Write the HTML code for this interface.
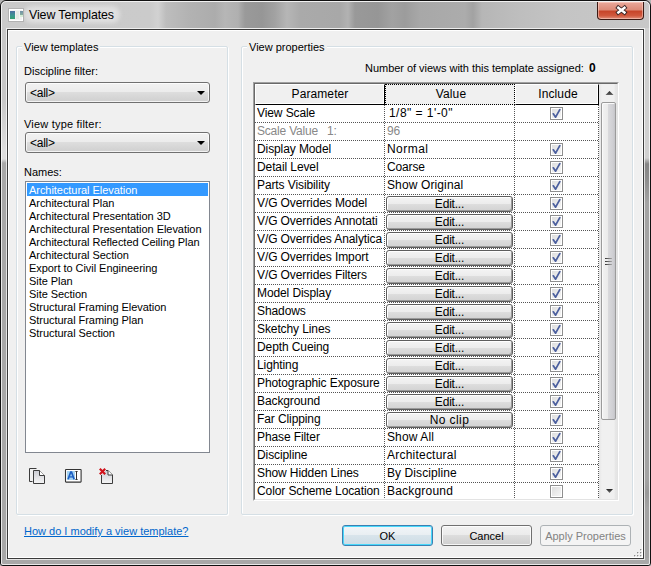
<!DOCTYPE html>
<html><head><meta charset="utf-8">
<style>
*{box-sizing:border-box;margin:0;padding:0}
html,body{width:651px;height:566px;overflow:hidden;background:#b4b4b4}
body{position:relative;font-family:"Liberation Sans",sans-serif;font-size:12px;color:#000}
.a{position:absolute}
.t{position:absolute;white-space:nowrap;line-height:14px}
#frame{left:0;top:0;width:651px;height:566px;border:1px solid #111;border-radius:6px 6px 3px 3px;background:#c6c6c6}
#tbar{left:2px;top:2px;width:647px;height:26px;border-radius:4px 4px 0 0;
 background:linear-gradient(90deg,#cacaca 0,#cbcbcb 148px,#d2d2d2 156px,#bdbdbd 164px,#b2b2b2 188px,#acacac 213px,#b6b6b6 223px,#b0b0b0 236px,#9a9a9a 243px,#969696 260px,#a2a2a2 273px,#b6b6b6 285px,#aaaaaa 298px,#a8a8a8 338px,#b2b2b2 346px,#999999 353px,#969696 376px,#a2a2a2 390px,#9c9c9c 403px,#a8a8a8 418px,#acacac 463px,#a2a2a2 471px,#b6b6b6 480px,#bebebe 518px,#c4c4c4 558px,#c8c8c8 647px)}
#frameHi{left:1px;top:1px;width:649px;height:564px;border:1px solid rgba(255,255,255,.75);border-radius:5px 5px 2px 2px}
#client{left:7px;top:29px;width:637px;height:530px;border:1px solid #3a3a3a;background:#f0f0f0;box-shadow:0 0 0 1px rgba(255,255,255,.7)}
#clientHi{left:8px;top:30px;width:635px;height:528px;border:1px solid #fff}
.grp{position:absolute;border:1px solid #d5dfe5;border-radius:2px;box-shadow:inset 1px 1px 0 #fff,1px 1px 0 #fff}
.lbl{background:#f0f0f0;padding:0 2px}
.combo{position:absolute;border:1px solid #707070;border-radius:3px;
 background:linear-gradient(#f2f2f2 0,#ebebeb 50%,#dddddd 50%,#cfcfcf 100%);box-shadow:inset 0 0 0 1px rgba(255,255,255,.75)}
.arrow{position:absolute;width:0;height:0;border-left:4px solid transparent;border-right:4px solid transparent;border-top:4px solid #000}
.li{font-size:11px;line-height:13px;letter-spacing:-0.05px;padding-top:1px}
.hd{background:#f0f0f0;border-top:1px solid #fff;border-left:1px solid #fff;border-right:1px solid #000;border-bottom:1px solid #000;box-shadow:inset -1px -1px 0 #fff}
.foc{border:1px dotted #000;background:transparent}
.th{font-size:12px;line-height:14px;letter-spacing:-0.2px}
.td{font-size:12px;line-height:14px;letter-spacing:-0.1px}
.vdot{width:1px;background:repeating-linear-gradient(180deg,#555 0,#555 1px,transparent 1px,transparent 2px)}
.hdot{height:1px;background:repeating-linear-gradient(90deg,#555 0,#555 1px,transparent 1px,transparent 2px)}
.ebtn{border:1px solid #5e5e5e;border-radius:3px;background:linear-gradient(#f4f4f4 0,#ececec 50%,#dedede 50%,#d2d2d2 100%);box-shadow:inset 1px 1px 0 #fff,inset -1px -1px 0 #9a9a9a}
.cb{width:13px;height:13px;border:1px solid #8f8f8f;background:linear-gradient(135deg,#dcdcdc,#f8f8f8);box-shadow:inset 0 0 0 1px #fff}
.arrowup{width:0;height:0;border-left:4px solid transparent;border-right:4px solid transparent;border-bottom:4px solid #333}
.thumb{border:1px solid #9b9b9b;border-radius:2px;background:linear-gradient(90deg,#f2f2f2 0,#ebebeb 45%,#d9d9dc 50%,#cfcfd3 85%,#c4c4c8 100%);box-shadow:inset 1px 1px 0 #fafafa}
.grip{width:7px;height:1px;background:linear-gradient(90deg,#333,#aaa)}
.lab{font-size:11px;line-height:14px}
.btn{border:1px solid #707070;border-radius:3px;background:linear-gradient(#f2f2f2 0,#ebebeb 50%,#dddddd 50%,#cfcfcf 100%);box-shadow:inset 0 0 0 1px rgba(255,255,255,.8)}
.okb{border:1px solid #3c7fb1;border-radius:3px;background:linear-gradient(#f1f5f8 0,#e8eef2 50%,#d8e4eb 50%,#cddce5 100%);box-shadow:inset 0 0 0 1px #48d8fb}
.dbtn{border:1px solid #adb2b5;border-radius:3px;background:#f4f4f4}
.closeb{border:1px solid #3b1a14;border-top:none;border-radius:0 0 4px 4px;background:linear-gradient(#e9a99b 0,#dd8b78 45%,#c7452a 55%,#d0583d 80%,#e0907c 100%);box-shadow:inset 0 0 0 1px rgba(255,220,210,.5)}
</style></head><body>
<div id="frame" class="a"></div>
<div id="tbar" class="a"></div>
<div class="a" style="left:1px;top:28px;width:6px;height:532px;background:linear-gradient(180deg,#c8c8c8 0,#c8c8c8 72px,#dedede 122px,#dedede 131px,#a8a8a8 135px,#a8a8a8 100%)"></div>
<div class="a" style="left:644px;top:28px;width:6px;height:532px;background:linear-gradient(180deg,#d0d0d0 0,#d0d0d0 130px,#858585 136px,#8c8c8c 150px,#a4a4a4 175px,#a4a4a4 450px,#999 465px,#a4a4a4 480px,#a4a4a4 100%)"></div>
<div class="a" style="left:1px;top:558px;width:649px;height:7px;background:#a8a8a8;border-radius:0 0 2px 2px"></div>
<div id="frameHi" class="a"></div>
<div id="client" class="a"></div>
<div id="clientHi" class="a"></div>

<!-- title -->
<div class="a" style="left:24px;top:6px;width:96px;height:17px;border-radius:8px;background:rgba(235,235,235,.65);filter:blur(2px)"></div>
<div class="t" style="left:29px;top:8px;font-size:12.4px;letter-spacing:-0.1px;color:#000">View Templates</div>

<!-- left group -->
<div class="grp" style="left:16px;top:46px;width:212px;height:469px"></div>
<div class="t lbl" style="left:22px;top:40px;font-size:11px">View templates</div>
<div class="t" style="left:24px;top:64px;font-size:11px">Discipline filter:</div>
<div class="combo" style="left:25px;top:82px;width:185px;height:21px"></div>
<div class="t" style="left:30px;top:86px;font-size:12px;letter-spacing:-0.25px">&lt;all&gt;</div>
<div class="arrow" style="left:197px;top:91px"></div>
<div class="t" style="left:24px;top:117px;font-size:11px;letter-spacing:0.2px">View type filter:</div>
<div class="combo" style="left:25px;top:132px;width:185px;height:21px"></div>
<div class="t" style="left:30px;top:136px;font-size:12px;letter-spacing:-0.25px">&lt;all&gt;</div>
<div class="arrow" style="left:197px;top:141px"></div>
<div class="t" style="left:24px;top:165px;font-size:11px">Names:</div>

<!-- right group -->
<div class="grp" style="left:241px;top:46px;width:392px;height:469px"></div>
<div class="t lbl" style="left:247px;top:40px;font-size:11px">View properties</div>

<!-- listbox -->
<div class="a" style="left:25px;top:181px;width:185px;height:272px;border:1px solid #828790;background:#fff"></div>
<div class="a" style="left:27px;top:183px;width:181px;height:13px;background:#3399ff"></div>
<div class="t li" style="left:29px;top:183px;color:#fff">Architectural Elevation</div>
<div class="t li" style="left:29px;top:196px;color:#000">Architectural Plan</div>
<div class="t li" style="left:29px;top:209px;color:#000">Architectural Presentation 3D</div>
<div class="t li" style="left:29px;top:222px;color:#000">Architectural Presentation Elevation</div>
<div class="t li" style="left:29px;top:235px;color:#000">Architectural Reflected Ceiling Plan</div>
<div class="t li" style="left:29px;top:248px;color:#000">Architectural Section</div>
<div class="t li" style="left:29px;top:261px;color:#000">Export to Civil Engineering</div>
<div class="t li" style="left:29px;top:274px;color:#000">Site Plan</div>
<div class="t li" style="left:29px;top:287px;color:#000">Site Section</div>
<div class="t li" style="left:29px;top:300px;color:#000">Structural Framing Elevation</div>
<div class="t li" style="left:29px;top:313px;color:#000">Structural Framing Plan</div>
<div class="t li" style="left:29px;top:326px;color:#000">Structural Section</div>
<!-- table -->
<div class="a" style="left:253px;top:82px;width:366px;height:419px;background:#fff;border-top:1px solid #a0a0a0;border-left:1px solid #a0a0a0;border-right:1px solid #fff;border-bottom:1px solid #fff"></div>
<div class="a" style="left:254px;top:83px;width:364px;height:417px;border-top:1px solid #696969;border-left:1px solid #696969;border-right:1px solid #e3e3e3;border-bottom:1px solid #e3e3e3"></div>
<div class="a hd" style="left:255px;top:84px;width:130px;height:21px"></div>
<div class="a foc" style="left:385px;top:84px;width:130px;height:21px;background:#f0f0f0"></div>
<div class="a hd" style="left:515px;top:84px;width:84px;height:21px"></div>
<div class="t th" style="left:255px;top:87px;width:130px;text-align:center;letter-spacing:0.1px">Parameter</div>
<div class="t th" style="left:386px;top:87px;width:130px;text-align:center;letter-spacing:0.15px">Value</div>
<div class="t th" style="left:515px;top:87px;width:86px;text-align:center;letter-spacing:0.1px">Include</div>
<div class="a vdot" style="left:384px;top:105px;height:394px"></div>
<div class="a vdot" style="left:514px;top:105px;height:394px"></div>
<div class="a vdot" style="left:598px;top:105px;height:394px"></div>
<div class="a hdot" style="left:255px;top:122px;width:344px"></div>
<div class="a hdot" style="left:255px;top:140px;width:344px"></div>
<div class="a hdot" style="left:255px;top:158px;width:344px"></div>
<div class="a hdot" style="left:255px;top:176px;width:344px"></div>
<div class="a hdot" style="left:255px;top:194px;width:344px"></div>
<div class="a hdot" style="left:255px;top:212px;width:344px"></div>
<div class="a hdot" style="left:255px;top:230px;width:344px"></div>
<div class="a hdot" style="left:255px;top:248px;width:344px"></div>
<div class="a hdot" style="left:255px;top:266px;width:344px"></div>
<div class="a hdot" style="left:255px;top:284px;width:344px"></div>
<div class="a hdot" style="left:255px;top:302px;width:344px"></div>
<div class="a hdot" style="left:255px;top:320px;width:344px"></div>
<div class="a hdot" style="left:255px;top:338px;width:344px"></div>
<div class="a hdot" style="left:255px;top:356px;width:344px"></div>
<div class="a hdot" style="left:255px;top:374px;width:344px"></div>
<div class="a hdot" style="left:255px;top:392px;width:344px"></div>
<div class="a hdot" style="left:255px;top:410px;width:344px"></div>
<div class="a hdot" style="left:255px;top:428px;width:344px"></div>
<div class="a hdot" style="left:255px;top:446px;width:344px"></div>
<div class="a hdot" style="left:255px;top:464px;width:344px"></div>
<div class="a hdot" style="left:255px;top:482px;width:344px"></div>
<div class="t td" style="left:257px;top:106px;width:126px;overflow:hidden;color:#000">View Scale</div>
<div class="t td" style="left:389px;top:106px;color:#000;letter-spacing:0.45px">1/8&quot; = 1'-0&quot;</div>
<div class="a cb" style="left:550px;top:107px"></div>
<svg class="a" style="left:550px;top:107px" width="13" height="13" viewBox="0 0 13 13"><path d="M3.3 6.8 L5.6 10.2 L9.8 2.6" fill="none" stroke="#4b5f9e" stroke-width="1.75" stroke-linecap="round" stroke-linejoin="round"/></svg>
<div class="t td" style="left:257px;top:124px;color:#888;letter-spacing:-0.2px">Scale Value</div><div class="t td" style="left:327px;top:124px;color:#888">1:</div>
<div class="t td" style="left:387px;top:124px;color:#888">96</div>
<div class="t td" style="left:257px;top:142px;width:126px;overflow:hidden;color:#000">Display Model</div>
<div class="t td" style="left:387px;top:142px;color:#000;letter-spacing:0.45px">Normal</div>
<div class="a cb" style="left:550px;top:143px"></div>
<svg class="a" style="left:550px;top:143px" width="13" height="13" viewBox="0 0 13 13"><path d="M3.3 6.8 L5.6 10.2 L9.8 2.6" fill="none" stroke="#4b5f9e" stroke-width="1.75" stroke-linecap="round" stroke-linejoin="round"/></svg>
<div class="t td" style="left:257px;top:160px;width:126px;overflow:hidden;color:#000">Detail Level</div>
<div class="t td" style="left:387px;top:160px;color:#000;letter-spacing:-0.15px">Coarse</div>
<div class="a cb" style="left:550px;top:161px"></div>
<svg class="a" style="left:550px;top:161px" width="13" height="13" viewBox="0 0 13 13"><path d="M3.3 6.8 L5.6 10.2 L9.8 2.6" fill="none" stroke="#4b5f9e" stroke-width="1.75" stroke-linecap="round" stroke-linejoin="round"/></svg>
<div class="t td" style="left:257px;top:178px;width:126px;overflow:hidden;color:#000">Parts Visibility</div>
<div class="t td" style="left:387px;top:178px;color:#000;letter-spacing:0.12px">Show Original</div>
<div class="a cb" style="left:550px;top:179px"></div>
<svg class="a" style="left:550px;top:179px" width="13" height="13" viewBox="0 0 13 13"><path d="M3.3 6.8 L5.6 10.2 L9.8 2.6" fill="none" stroke="#4b5f9e" stroke-width="1.75" stroke-linecap="round" stroke-linejoin="round"/></svg>
<div class="t td" style="left:257px;top:196px;width:126px;overflow:hidden;color:#000">V/G Overrides Model</div>
<div class="a ebtn" style="left:386px;top:196px;width:127px;height:16px"></div>
<div class="t td" style="left:386px;top:197px;width:127px;text-align:center;letter-spacing:-0.2px">Edit...</div>
<div class="a cb" style="left:550px;top:197px"></div>
<svg class="a" style="left:550px;top:197px" width="13" height="13" viewBox="0 0 13 13"><path d="M3.3 6.8 L5.6 10.2 L9.8 2.6" fill="none" stroke="#4b5f9e" stroke-width="1.75" stroke-linecap="round" stroke-linejoin="round"/></svg>
<div class="t td" style="left:257px;top:214px;width:126px;overflow:hidden;color:#000">V/G Overrides Annotati</div>
<div class="a ebtn" style="left:386px;top:214px;width:127px;height:16px"></div>
<div class="t td" style="left:386px;top:215px;width:127px;text-align:center;letter-spacing:-0.2px">Edit...</div>
<div class="a cb" style="left:550px;top:215px"></div>
<svg class="a" style="left:550px;top:215px" width="13" height="13" viewBox="0 0 13 13"><path d="M3.3 6.8 L5.6 10.2 L9.8 2.6" fill="none" stroke="#4b5f9e" stroke-width="1.75" stroke-linecap="round" stroke-linejoin="round"/></svg>
<div class="t td" style="left:257px;top:232px;width:126px;overflow:hidden;color:#000">V/G Overrides Analytica</div>
<div class="a ebtn" style="left:386px;top:232px;width:127px;height:16px"></div>
<div class="t td" style="left:386px;top:233px;width:127px;text-align:center;letter-spacing:-0.2px">Edit...</div>
<div class="a cb" style="left:550px;top:233px"></div>
<svg class="a" style="left:550px;top:233px" width="13" height="13" viewBox="0 0 13 13"><path d="M3.3 6.8 L5.6 10.2 L9.8 2.6" fill="none" stroke="#4b5f9e" stroke-width="1.75" stroke-linecap="round" stroke-linejoin="round"/></svg>
<div class="t td" style="left:257px;top:250px;width:126px;overflow:hidden;color:#000">V/G Overrides Import</div>
<div class="a ebtn" style="left:386px;top:250px;width:127px;height:16px"></div>
<div class="t td" style="left:386px;top:251px;width:127px;text-align:center;letter-spacing:-0.2px">Edit...</div>
<div class="a cb" style="left:550px;top:251px"></div>
<svg class="a" style="left:550px;top:251px" width="13" height="13" viewBox="0 0 13 13"><path d="M3.3 6.8 L5.6 10.2 L9.8 2.6" fill="none" stroke="#4b5f9e" stroke-width="1.75" stroke-linecap="round" stroke-linejoin="round"/></svg>
<div class="t td" style="left:257px;top:268px;width:126px;overflow:hidden;color:#000">V/G Overrides Filters</div>
<div class="a ebtn" style="left:386px;top:268px;width:127px;height:16px"></div>
<div class="t td" style="left:386px;top:269px;width:127px;text-align:center;letter-spacing:-0.2px">Edit...</div>
<div class="a cb" style="left:550px;top:269px"></div>
<svg class="a" style="left:550px;top:269px" width="13" height="13" viewBox="0 0 13 13"><path d="M3.3 6.8 L5.6 10.2 L9.8 2.6" fill="none" stroke="#4b5f9e" stroke-width="1.75" stroke-linecap="round" stroke-linejoin="round"/></svg>
<div class="t td" style="left:257px;top:286px;width:126px;overflow:hidden;color:#000">Model Display</div>
<div class="a ebtn" style="left:386px;top:286px;width:127px;height:16px"></div>
<div class="t td" style="left:386px;top:287px;width:127px;text-align:center;letter-spacing:-0.2px">Edit...</div>
<div class="a cb" style="left:550px;top:287px"></div>
<svg class="a" style="left:550px;top:287px" width="13" height="13" viewBox="0 0 13 13"><path d="M3.3 6.8 L5.6 10.2 L9.8 2.6" fill="none" stroke="#4b5f9e" stroke-width="1.75" stroke-linecap="round" stroke-linejoin="round"/></svg>
<div class="t td" style="left:257px;top:304px;width:126px;overflow:hidden;color:#000">Shadows</div>
<div class="a ebtn" style="left:386px;top:304px;width:127px;height:16px"></div>
<div class="t td" style="left:386px;top:305px;width:127px;text-align:center;letter-spacing:-0.2px">Edit...</div>
<div class="a cb" style="left:550px;top:305px"></div>
<svg class="a" style="left:550px;top:305px" width="13" height="13" viewBox="0 0 13 13"><path d="M3.3 6.8 L5.6 10.2 L9.8 2.6" fill="none" stroke="#4b5f9e" stroke-width="1.75" stroke-linecap="round" stroke-linejoin="round"/></svg>
<div class="t td" style="left:257px;top:322px;width:126px;overflow:hidden;color:#000">Sketchy Lines</div>
<div class="a ebtn" style="left:386px;top:322px;width:127px;height:16px"></div>
<div class="t td" style="left:386px;top:323px;width:127px;text-align:center;letter-spacing:-0.2px">Edit...</div>
<div class="a cb" style="left:550px;top:323px"></div>
<svg class="a" style="left:550px;top:323px" width="13" height="13" viewBox="0 0 13 13"><path d="M3.3 6.8 L5.6 10.2 L9.8 2.6" fill="none" stroke="#4b5f9e" stroke-width="1.75" stroke-linecap="round" stroke-linejoin="round"/></svg>
<div class="t td" style="left:257px;top:340px;width:126px;overflow:hidden;color:#000">Depth Cueing</div>
<div class="a ebtn" style="left:386px;top:340px;width:127px;height:16px"></div>
<div class="t td" style="left:386px;top:341px;width:127px;text-align:center;letter-spacing:-0.2px">Edit...</div>
<div class="a cb" style="left:550px;top:341px"></div>
<svg class="a" style="left:550px;top:341px" width="13" height="13" viewBox="0 0 13 13"><path d="M3.3 6.8 L5.6 10.2 L9.8 2.6" fill="none" stroke="#4b5f9e" stroke-width="1.75" stroke-linecap="round" stroke-linejoin="round"/></svg>
<div class="t td" style="left:257px;top:358px;width:126px;overflow:hidden;color:#000">Lighting</div>
<div class="a ebtn" style="left:386px;top:358px;width:127px;height:16px"></div>
<div class="t td" style="left:386px;top:359px;width:127px;text-align:center;letter-spacing:-0.2px">Edit...</div>
<div class="a cb" style="left:550px;top:359px"></div>
<svg class="a" style="left:550px;top:359px" width="13" height="13" viewBox="0 0 13 13"><path d="M3.3 6.8 L5.6 10.2 L9.8 2.6" fill="none" stroke="#4b5f9e" stroke-width="1.75" stroke-linecap="round" stroke-linejoin="round"/></svg>
<div class="t td" style="left:257px;top:376px;width:126px;overflow:hidden;color:#000">Photographic Exposure</div>
<div class="a ebtn" style="left:386px;top:376px;width:127px;height:16px"></div>
<div class="t td" style="left:386px;top:377px;width:127px;text-align:center;letter-spacing:-0.2px">Edit...</div>
<div class="a cb" style="left:550px;top:377px"></div>
<svg class="a" style="left:550px;top:377px" width="13" height="13" viewBox="0 0 13 13"><path d="M3.3 6.8 L5.6 10.2 L9.8 2.6" fill="none" stroke="#4b5f9e" stroke-width="1.75" stroke-linecap="round" stroke-linejoin="round"/></svg>
<div class="t td" style="left:257px;top:394px;width:126px;overflow:hidden;color:#000">Background</div>
<div class="a ebtn" style="left:386px;top:394px;width:127px;height:16px"></div>
<div class="t td" style="left:386px;top:395px;width:127px;text-align:center;letter-spacing:-0.2px">Edit...</div>
<div class="a cb" style="left:550px;top:395px"></div>
<svg class="a" style="left:550px;top:395px" width="13" height="13" viewBox="0 0 13 13"><path d="M3.3 6.8 L5.6 10.2 L9.8 2.6" fill="none" stroke="#4b5f9e" stroke-width="1.75" stroke-linecap="round" stroke-linejoin="round"/></svg>
<div class="t td" style="left:257px;top:412px;width:126px;overflow:hidden;color:#000">Far Clipping</div>
<div class="a ebtn" style="left:386px;top:412px;width:127px;height:16px"></div>
<div class="t td" style="left:386px;top:413px;width:127px;text-align:center;letter-spacing:0.4px">No clip</div>
<div class="a cb" style="left:550px;top:413px"></div>
<svg class="a" style="left:550px;top:413px" width="13" height="13" viewBox="0 0 13 13"><path d="M3.3 6.8 L5.6 10.2 L9.8 2.6" fill="none" stroke="#4b5f9e" stroke-width="1.75" stroke-linecap="round" stroke-linejoin="round"/></svg>
<div class="t td" style="left:257px;top:430px;width:126px;overflow:hidden;color:#000">Phase Filter</div>
<div class="t td" style="left:387px;top:430px;color:#000;letter-spacing:0.12px">Show All</div>
<div class="a cb" style="left:550px;top:431px"></div>
<svg class="a" style="left:550px;top:431px" width="13" height="13" viewBox="0 0 13 13"><path d="M3.3 6.8 L5.6 10.2 L9.8 2.6" fill="none" stroke="#4b5f9e" stroke-width="1.75" stroke-linecap="round" stroke-linejoin="round"/></svg>
<div class="t td" style="left:257px;top:448px;width:126px;overflow:hidden;color:#000">Discipline</div>
<div class="t td" style="left:387px;top:448px;color:#000;letter-spacing:0.22px">Architectural</div>
<div class="a cb" style="left:550px;top:449px"></div>
<svg class="a" style="left:550px;top:449px" width="13" height="13" viewBox="0 0 13 13"><path d="M3.3 6.8 L5.6 10.2 L9.8 2.6" fill="none" stroke="#4b5f9e" stroke-width="1.75" stroke-linecap="round" stroke-linejoin="round"/></svg>
<div class="t td" style="left:257px;top:466px;width:126px;overflow:hidden;color:#000">Show Hidden Lines</div>
<div class="t td" style="left:387px;top:466px;color:#000;letter-spacing:0.08px">By Discipline</div>
<div class="a cb" style="left:550px;top:467px"></div>
<svg class="a" style="left:550px;top:467px" width="13" height="13" viewBox="0 0 13 13"><path d="M3.3 6.8 L5.6 10.2 L9.8 2.6" fill="none" stroke="#4b5f9e" stroke-width="1.75" stroke-linecap="round" stroke-linejoin="round"/></svg>
<div class="t td" style="left:257px;top:484px;width:126px;overflow:hidden;color:#000">Color Scheme Location</div>
<div class="t td" style="left:387px;top:484px;color:#000;letter-spacing:0.2px">Background</div>
<div class="a cb" style="left:550px;top:485px"></div>
<div class="a" style="left:599px;top:84px;width:18px;height:415px;background:linear-gradient(90deg,#e6e6e6 0,#f0f0f0 3px,#f0f0f0 15px,#e3e3e3 17px,#e8e8e8 18px)"></div>
<svg class="a" style="left:605px;top:90px" width="9" height="6" viewBox="0 0 9 6"><defs><linearGradient id="ag2" x1="0" y1="0" x2="0" y2="1"><stop offset="0" stop-color="#222"/><stop offset="1" stop-color="#666"/></linearGradient></defs><path d="M4.5 1 L8.5 5 H0.5 Z" fill="url(#ag2)"/></svg>
<div class="a thumb" style="left:601px;top:102px;width:15px;height:318px"></div>
<div class="a grip" style="left:605px;top:258px"></div><div class="a grip" style="left:605px;top:261px"></div><div class="a grip" style="left:605px;top:264px"></div>
<svg class="a" style="left:605px;top:488px" width="9" height="6" viewBox="0 0 9 6"><defs><linearGradient id="ag" x1="0" y1="0" x2="0" y2="1"><stop offset="0" stop-color="#222"/><stop offset="1" stop-color="#777"/></linearGradient></defs><path d="M1 1 H8 L4.5 5 Z" fill="url(#ag)"/></svg>
<!-- count -->
<div class="t lab" style="left:365px;top:61px;letter-spacing:-0.03px">Number of views with this template assigned:</div>
<div class="t" style="left:589px;top:61px;font-weight:bold;font-size:12px">0</div>
<!-- icons -->
<svg class="a" style="left:26px;top:465px" width="22" height="22" viewBox="0 0 22 22">
 <defs><linearGradient id="pg" x1="0" y1="0" x2="0" y2="1"><stop offset="0" stop-color="#cacbd2"/><stop offset="1" stop-color="#f6f6f6"/></linearGradient></defs>
 <path d="M10.5 3.5 H3.5 V16.5 H6.5" fill="none" stroke="#3c3c3c" stroke-width="1"/>
 <path d="M7.5 5.5 H13.5 L18.5 10.5 V18.5 H7.5 Z" fill="url(#pg)" stroke="#3c3c3c" stroke-width="1"/>
 <path d="M13.5 5.5 V10.5 H18.5" fill="#fff" stroke="#3c3c3c" stroke-width="1"/>
</svg>
<svg class="a" style="left:62px;top:465px" width="22" height="22" viewBox="0 0 22 22">
 <rect x="3.5" y="4.5" width="15.6" height="12.6" rx="0.6" fill="#fff" stroke="#333" stroke-width="1.1"/>
 <rect x="5" y="6" width="8" height="9" fill="#a6d4f2"/>
 <path d="M6.1 14.3 L8.7 7 L9.5 7 L12.1 14.3" fill="none" stroke="#1d5fc4" stroke-width="1.7"/>
 <path d="M7.4 11.9 H10.9" stroke="#1d5fc4" stroke-width="1.3"/>
 <path d="M13.4 6.5 H15.6 M14.5 6.5 V14.5 M13.4 14.5 H15.6" stroke="#333" stroke-width="1"/>
</svg>
<svg class="a" style="left:96px;top:465px" width="22" height="22" viewBox="0 0 22 22">
 <path d="M5.5 10 V18.5 H16.5 V10 L12 5.5 H10" fill="url(#pg)" stroke="#3c3c3c" stroke-width="1"/>
 <path d="M12 5.5 V10 H16.5" fill="#fff" stroke="#3c3c3c" stroke-width="1"/>
 <path d="M3.8 3.8 L9.2 9.2 M9.2 3.8 L3.8 9.2" stroke="#d0121b" stroke-width="2.2"/>
</svg>
<!-- link -->
<div class="t lab" style="left:24px;top:524px;color:#0066cc;text-decoration:underline">How do I modify a view template?</div>
<!-- buttons -->
<div class="a okb" style="left:342px;top:525px;width:91px;height:21px"></div>
<div class="t lab" style="left:342px;top:529px;width:91px;text-align:center">OK</div>
<div class="a btn" style="left:441px;top:525px;width:91px;height:21px"></div>
<div class="t lab" style="left:441px;top:529px;width:91px;text-align:center">Cancel</div>
<div class="a dbtn" style="left:540px;top:525px;width:91px;height:21px"></div>
<div class="t lab" style="left:540px;top:529px;width:91px;text-align:center;color:#838383">Apply Properties</div>
<!-- grip -->
<svg class="a" style="left:632px;top:547px" width="10" height="10" viewBox="0 0 10 10">
 <g fill="#fff"><rect x="9" y="3" width="1" height="1"/><rect x="6" y="6" width="1" height="1"/><rect x="9" y="6" width="1" height="1"/><rect x="3" y="9" width="1" height="1"/><rect x="6" y="9" width="1" height="1"/><rect x="9" y="9" width="1" height="1"/></g>
 <g fill="#8c8c8c"><rect x="8" y="2" width="1.3" height="1.3"/><rect x="5" y="5" width="1.3" height="1.3"/><rect x="8" y="5" width="1.3" height="1.3"/><rect x="2" y="8" width="1.3" height="1.3"/><rect x="5" y="8" width="1.3" height="1.3"/><rect x="8" y="8" width="1.3" height="1.3"/></g>
</svg>
<!-- close -->
<div class="a closeb" style="left:597px;top:2px;width:47px;height:18px"></div>
<svg class="a" style="left:613px;top:3px" width="17" height="14" viewBox="0 0 17 14">
 <path d="M5.3 4.7 L11.5 9.5 M11.5 4.7 L5.3 9.5" stroke="#3a2626" stroke-width="4.2" stroke-linecap="square"/>
 <path d="M5.3 4.7 L11.5 9.5 M11.5 4.7 L5.3 9.5" stroke="#fff" stroke-width="2.4" stroke-linecap="square"/>
</svg>
<!-- title icon -->
<div class="a" style="left:8px;top:8px;width:16px;height:14px;border:1px solid #b2b2b2;background:#f2f2f2;box-shadow:inset 0 0 0 1px #fff"></div>
<div class="a" style="left:10px;top:11px;width:5px;height:8px;background:linear-gradient(#4d6ea2,#3a9690 55%,#34a070)"></div>
<div class="a" style="left:16px;top:11px;width:3px;height:8px;background:#e4ebe4"></div>
<div class="a" style="left:20px;top:11px;width:3px;height:4px;background:linear-gradient(#7090a8,#88b0a0)"></div>
<div class="a" style="left:20px;top:15px;width:3px;height:2px;background:#d6ecd6"></div>
</body></html>
